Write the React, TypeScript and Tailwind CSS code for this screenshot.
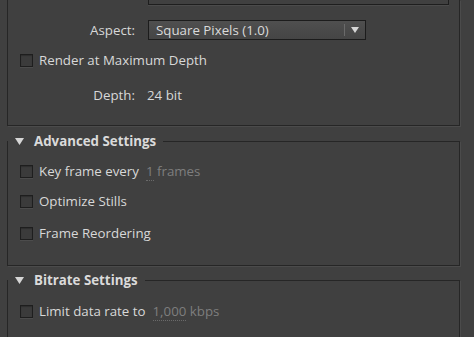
import React from "react";

// Fieldset-style group with a collapsible caret in its legend
const Group = ({ title, children, className }: { title: string; children: React.ReactNode; className?: string }) => (
  <fieldset className={`ml-[7px] w-[453px] border border-[#262626] shadow-[1px_1px_0_#4b4b4b] ${className ?? ""}`}>
    <legend className="flex items-center h-[18px] pl-[7px] pr-[7px]">
      <svg width="9" height="7" viewBox="0 0 9 7" className="mr-[10px]">
        <polygon points="0,0 9,0 4.5,7" fill="#d6d6d6" />
      </svg>
      <span className="font-bold text-[#dadada]">{title}</span>
    </legend>
    {children}
  </fieldset>
);

const Checkbox = () => (
  <span className="w-[13px] h-[13px] border border-[#1e1e1e] bg-[#3b3b3b] shadow-[inset_0_1px_1px_#2e2e2e,0_1px_0_#4c4c4c] shrink-0" />
);

const CheckRow = ({ label, children, className }: { label: string; children?: React.ReactNode; className?: string }) => (
  <div className={`flex items-center h-[18px] pl-[12px] ${className ?? ""}`}>
    <Checkbox />
    <span className="ml-[6px] text-[#d8d8d8]">{label}</span>
    {children}
  </div>
);

const Scrub = ({ value, unit }: { value: string; unit: string }) => (
  <span className="ml-[7px] text-[#7e7e7e]">
    <span className="border-b border-dotted border-[#6a6a6a]">{value}</span> {unit}
  </span>
);

export default function App() {
  return (
    <div
      className="w-[474px] h-[337px] bg-[#404040] overflow-hidden text-[13.3px] leading-[18px]"
      style={{ fontFamily: "'Open Sans', 'DejaVu Sans', sans-serif" }}
    >
      {/* Video settings panel (top cut off) */}
      <div className="ml-[7px] w-[453px] h-[126px] border-x border-b border-[#262626] shadow-[1px_1px_0_#4b4b4b] flex flex-col">
        <div className="ml-[140px] w-[301px] h-[5px] border-x border-b border-[#1e1e1e] shadow-[0_1px_0_#4b4b4b]" />

        <div className="flex items-center mt-[15px] h-[20px]">
          <span className="w-[127px] text-right text-[#d8d8d8]">Aspect:</span>
          <div className="ml-[13px] w-[218px] h-[20px] border border-[#1c1c1c] bg-gradient-to-b from-[#4f4f4f] to-[#454545] flex items-center">
            <span className="pl-[7px] flex-1 text-[#dadada]">Square Pixels (1.0)</span>
            <span className="w-px h-[12px] bg-[#6a6a6a] mr-[6px]" />
            <svg width="8" height="6" viewBox="0 0 8 6" className="mr-[6px]">
              <polygon points="0,0 8,0 4,6" fill="#d6d6d6" />
            </svg>
          </div>
        </div>

        <CheckRow label="Render at Maximum Depth" className="mt-[11px]" />

        <div className="flex items-center mt-[17px] h-[18px]">
          <span className="w-[127px] text-right text-[#d8d8d8]">Depth:</span>
          <span className="ml-[12px] text-[#d8d8d8]">24 bit</span>
        </div>
      </div>

      <Group title="Advanced Settings" className="mt-[6px] pb-[23px]">
        <CheckRow label="Key frame every" className="mt-[12px]">
          <Scrub value="1" unit="frames" />
        </CheckRow>
        <CheckRow label="Optimize Stills" className="mt-[12px]" />
        <CheckRow label="Frame Reordering" className="mt-[14px]" />
      </Group>

      <Group title="Bitrate Settings" className="mt-[5px] h-[120px]">
        <CheckRow label="Limit data rate to" className="mt-[13px]">
          <Scrub value="1,000" unit="kbps" />
        </CheckRow>
      </Group>
    </div>
  );
}
